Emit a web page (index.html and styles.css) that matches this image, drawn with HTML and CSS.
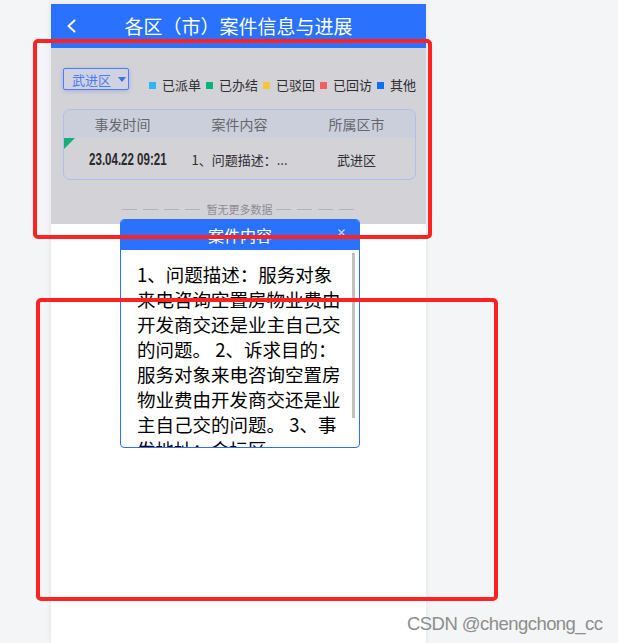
FILE: index.html
```html
<!DOCTYPE html>
<html lang="zh-CN">
<head>
<meta charset="utf-8">
<title>各区（市）案件信息与进展</title>
<link rel="stylesheet" href="styles.css">
</head>
<body>
<div class="stage">
  <div class="phone">
    <header class="nav">
      <span class="back">
        <svg width="10" height="14" viewBox="0 0 10 14"><polyline points="8.5,1.5 2.5,7 8.5,12.5" fill="none" stroke="#fff" stroke-width="2" stroke-linecap="round" stroke-linejoin="round"/></svg>
      </span>
      <h1>各区（市）案件信息与进展</h1>
      <span></span>
    </header>
    <section class="content">
      <div class="filters">
        <div class="select"><span>武进区</span><span class="caret"></span></div>
        <ul class="legend">
          <li><i class="dot c1"></i>已派单</li>
          <li><i class="dot c2"></i>已办结</li>
          <li><i class="dot c3"></i>已驳回</li>
          <li><i class="dot c4"></i>已回访</li>
          <li><i class="dot c5"></i>其他</li>
        </ul>
      </div>
      <div class="table">
        <div class="thead"><span>事发时间</span><span>案件内容</span><span>所属区市</span></div>
        <div class="row"><i class="flag"></i><span class="time">23.04.22 09:21</span><span>1、问题描述：...</span><span>武进区</span></div>
      </div>
      <div class="nomore"><span class="line"></span><span>暂无更多数据</span><span class="line"></span></div>
    </section>
    <div class="modal">
      <div class="modal-head">案件内容
        <span class="close"><svg width="7" height="7" viewBox="0 0 7 7"><path d="M0.5 0.5L6.5 6.5M6.5 0.5L0.5 6.5" stroke="rgba(255,255,255,0.75)" stroke-width="1.1"/></svg></span>
      </div>
      <div class="modal-body">
        <p>1、问题描述：服务对象来电咨询空置房物业费由开发商交还是业主自己交的问题。 2、诉求目的：服务对象来电咨询空置房物业费由开发商交还是业主自己交的问题。 3、事发地址：金坛区</p>
        <span class="thumb"></span>
      </div>
    </div>
  </div>
  <div class="mark mark1"></div>
  <div class="mark mark2"></div>
  <div class="wm">CSDN @chengchong_cc</div>
</div>
</body>
</html>
```
FILE: styles.css
```css
body {
  margin: 0;
  background: #f4f5f6;
  font-family: "Noto Sans CJK SC", "Noto Sans", sans-serif;
}
.stage {
  position: relative;
  width: 618px;
  height: 643px;
  padding: 4px 0 0 51px;
  box-sizing: border-box;
  overflow: hidden;
}
.phone {
  position: relative;
  width: 375px;
  height: 639px;
  background: #fff;
  box-shadow: 0 0 6px rgba(0, 0, 0, 0.08);
}
.nav {
  height: 44px;
  background: #2a72fe;
  display: grid;
  grid-template-columns: 40px 1fr 40px;
  align-items: center;
  color: #fff;
}
.back {
  padding-left: 15px;
  display: flex;
}
.nav h1 {
  margin: 0;
  font-size: 19px;
  font-weight: 400;
  line-height: 44px;
  text-align: center;
}
.content {
  height: 176px;
  background: #d3d2d7;
  padding: 20px 10px 0 12px;
  box-sizing: border-box;
}
.filters {
  display: flex;
  align-items: flex-start;
  height: 22px;
}
.select {
  width: 66px;
  height: 22px;
  box-sizing: border-box;
  border: 1.5px solid #4c7cf6;
  border-radius: 2px;
  background: #d0d2e0;
  box-shadow: 0 1px 4px rgba(70, 110, 240, 0.35);
  display: flex;
  align-items: center;
  justify-content: space-between;
  padding: 0 2px 0 8px;
  color: #4a7af6;
  font-size: 13px;
  line-height: 1;
}
.caret {
  width: 0;
  height: 0;
  border-left: 4px solid transparent;
  border-right: 4px solid transparent;
  border-top: 5px solid #3d6ff3;
}
.legend {
  display: flex;
  gap: 5px;
  margin: 10px 0 0 20px;
  padding: 0;
  list-style: none;
  font-size: 13px;
  line-height: 14px;
  color: #2d2c31;
  white-space: nowrap;
}
.legend li {
  display: flex;
  align-items: center;
  gap: 6px;
}
.dot {
  width: 7px;
  height: 7px;
}
.c1 { background: #2db6f7; }
.c2 { background: #0bb27a; }
.c3 { background: #f9c33e; }
.c4 { background: #f95b5f; }
.c5 { background: #0b6ffb; }
.table {
  margin-top: 19px;
  width: 353px;
  box-sizing: border-box;
  border: 1px solid #b2bee9;
  border-radius: 7px;
  overflow: hidden;
}
.thead {
  display: grid;
  grid-template-columns: repeat(3, 1fr);
  height: 28px;
  background: #cbcfdc;
  color: #67666c;
  font-size: 14px;
  line-height: 28px;
  text-align: center;
}
.row {
  position: relative;
  display: grid;
  grid-template-columns: repeat(3, 1fr);
  align-items: center;
  height: 41px;
  box-sizing: border-box;
  padding-top: 2px;
  text-align: center;
  font-size: 13px;
  color: #2e2d31;
}
.flag {
  position: absolute;
  left: 0;
  top: 0;
  width: 0;
  height: 0;
  border-top: 11px solid #14ae76;
  border-right: 11px solid transparent;
}
.time {
  justify-self: center;
  white-space: nowrap;
  font-family: "Liberation Sans", sans-serif;
  font-weight: 700;
  font-size: 16px;
  transform: translateX(5px) scaleX(0.72);
  color: #2a292d;
}
.nomore {
  display: flex;
  align-items: center;
  justify-content: center;
  gap: 3px;
  margin-top: 22px;
  font-size: 11px;
  line-height: 14px;
  color: #8e8d92;
}
.nomore .line {
  width: 82px;
  height: 1px;
  background: repeating-linear-gradient(90deg, #b3b2b7 0 15px, transparent 15px 21px);
}
.modal {
  position: absolute;
  left: 69px;
  top: 215px;
  width: 240px;
  height: 229px;
  box-sizing: border-box;
  border: 1px solid #2c6ffa;
  border-radius: 4px;
  background: #fff;
  overflow: hidden;
}
.modal-head {
  position: relative;
  height: 30px;
  background: #2a72fe;
  color: #fff;
  font-size: 16px;
  line-height: 30px;
  text-align: center;
}
.close {
  position: absolute;
  right: 14px;
  top: 9px;
  display: flex;
}
.modal-body {
  position: relative;
  height: 197px;
  box-sizing: border-box;
  padding: 12px 14px 0 16px;
  overflow: hidden;
  font-size: 18.5px;
  line-height: 25px;
  color: #000;
}
.modal-body p {
  margin: 0;
}
.thumb {
  position: absolute;
  right: 4px;
  top: 3px;
  width: 3px;
  height: 165px;
  background: #c1c1c1;
}
.mark {
  position: absolute;
  box-sizing: border-box;
  border: 4px solid #ff2222;
  border-radius: 5px;
}
.mark1 {
  left: 33px;
  top: 39px;
  width: 399px;
  height: 200px;
}
.mark2 {
  left: 36px;
  top: 298px;
  width: 462px;
  height: 303px;
}
.wm {
  position: absolute;
  left: 407px;
  top: 614px;
  font-family: "Liberation Sans", sans-serif;
  font-size: 18.5px;
  line-height: 20px;
  letter-spacing: -0.55px;
  color: #8d8d8d;
}
```
